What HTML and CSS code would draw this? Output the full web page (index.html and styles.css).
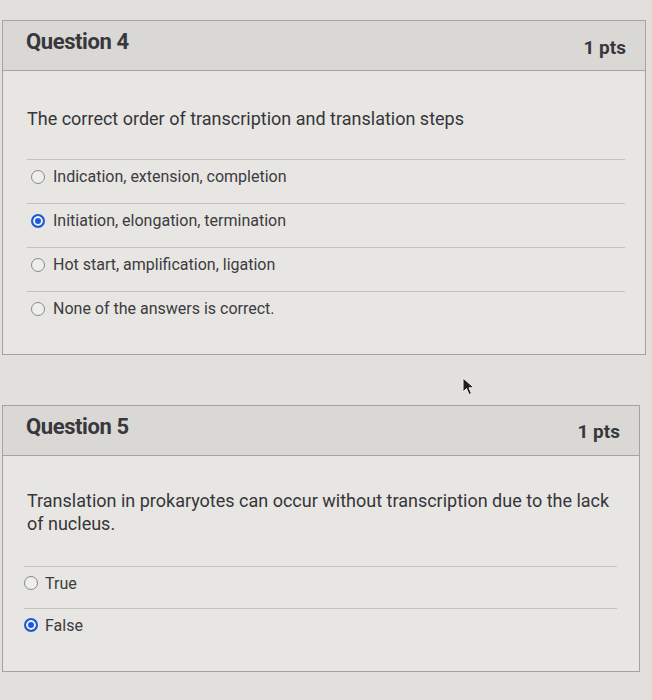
FILE: index.html
```html
<!DOCTYPE html>
<html lang="en">
<head>
<meta charset="utf-8">
<title>Quiz</title>
<link rel="stylesheet" href="styles.css">
</head>
<body>
<main class="page">
  <section class="card card--q4">
    <header class="card-header">
      <h2 class="card-title">Question 4</h2>
      <span class="card-points">1 pts</span>
    </header>
    <div class="card-body">
      <p class="question-text">The correct order of transcription and translation steps</p>
      <div class="answers">
        <label class="answer"><span class="radio"></span><span class="answer-text">Indication, extension, completion</span></label>
        <label class="answer"><span class="radio radio--checked"></span><span class="answer-text">Initiation, elongation, termination</span></label>
        <label class="answer"><span class="radio"></span><span class="answer-text">Hot start, amplification, ligation</span></label>
        <label class="answer"><span class="radio"></span><span class="answer-text">None of the answers is correct.</span></label>
      </div>
    </div>
  </section>

  <div class="gap">
    <svg class="cursor" width="14" height="20" viewBox="0 0 14 20"><path d="M1 1 L1 15 L4.5 11.5 L7 17.5 L9.5 16.5 L7 10.8 L12 10.8 Z" fill="#1e1e22" stroke="#f2f2f2" stroke-width="1"/></svg>
  </div>

  <section class="card card--q5">
    <header class="card-header">
      <h2 class="card-title">Question 5</h2>
      <span class="card-points">1 pts</span>
    </header>
    <div class="card-body card-body--q5">
      <p class="question-text">Translation in prokaryotes can occur without transcription due to the lack of nucleus.</p>
      <div class="answers answers--tight">
        <label class="answer"><span class="radio"></span><span class="answer-text">True</span></label>
        <label class="answer"><span class="radio radio--checked"></span><span class="answer-text">False</span></label>
      </div>
    </div>
  </section>
</main>
</body>
</html>
```

FILE: styles.css
```css
html, body {
  margin: 0;
  padding: 0;
}
body {
  background: #e1e0dd;
  font-family: Roboto, "Liberation Sans", Arial, sans-serif;
  color: #3a393e;
  width: 652px;
  height: 700px;
  overflow: hidden;
}
.page {
  padding-top: 20px;
  display: flex;
  flex-direction: column;
}
.card {
  margin-left: 2px;
  border: 1px solid #a4a3a1;
  background: #e7e6e3;
  box-sizing: border-box;
}
.card--q4 { width: 644px; }
.card--q5 { width: 638px; }
.card-header {
  height: 50px;
  box-sizing: border-box;
  background: #d9d8d5;
  border-bottom: 1px solid #a4a3a1;
  display: flex;
  align-items: flex-start;
  justify-content: space-between;
  padding: 0 19px 0 23px;
}
.card-title {
  margin: 0;
  padding-top: 8px;
  font-size: 22px;
  line-height: 26px;
  font-weight: 700;
  color: #38373c;
  letter-spacing: -0.4px;
}
.card-points {
  font-size: 19px;
  line-height: 24px;
  font-weight: 700;
  color: #38373c;
  padding-top: 15px;
}
.card--q5 .card-points {
  padding-top: 14px;
}
.card-body {
  padding: 36px 20px 19px 24px;
}
.card-body--q5 {
  padding: 33px 22px 21px 24px;
}
.question-text {
  margin: 0 0 28px 0;
  font-size: 18px;
  line-height: 24px;
  color: #36353a;
}
.card-body--q5 .question-text {
  margin-bottom: 31px;
  line-height: 23px;
}
.answers {
  display: flex;
  flex-direction: column;
}
.answers--tight {
  margin-left: -3px;
}
.answer {
  display: flex;
  align-items: center;
  gap: 8px;
  height: 44px;
  box-sizing: border-box;
  border-top: 1px solid #c4c3c0;
  padding: 0 0 10px 4px;
  font-size: 16px;
  color: #3c3b40;
}
.answers--tight .answer {
  height: 42px;
  padding-left: 0;
  gap: 7px;
  padding-bottom: 9px;
}
.radio {
  width: 14px;
  height: 14px;
  box-sizing: border-box;
  border: 1.5px solid #8a898b;
  border-radius: 50%;
  background: #eeeeec;
  flex: none;
}
.radio--checked {
  border: 2px solid #1f5ad6;
  background: #1f5ad6;
  box-shadow: inset 0 0 0 2px #f4f4f4;
}
.gap {
  height: 50px;
  position: relative;
}
.cursor {
  position: absolute;
  left: 462px;
  top: 22px;
}
```
